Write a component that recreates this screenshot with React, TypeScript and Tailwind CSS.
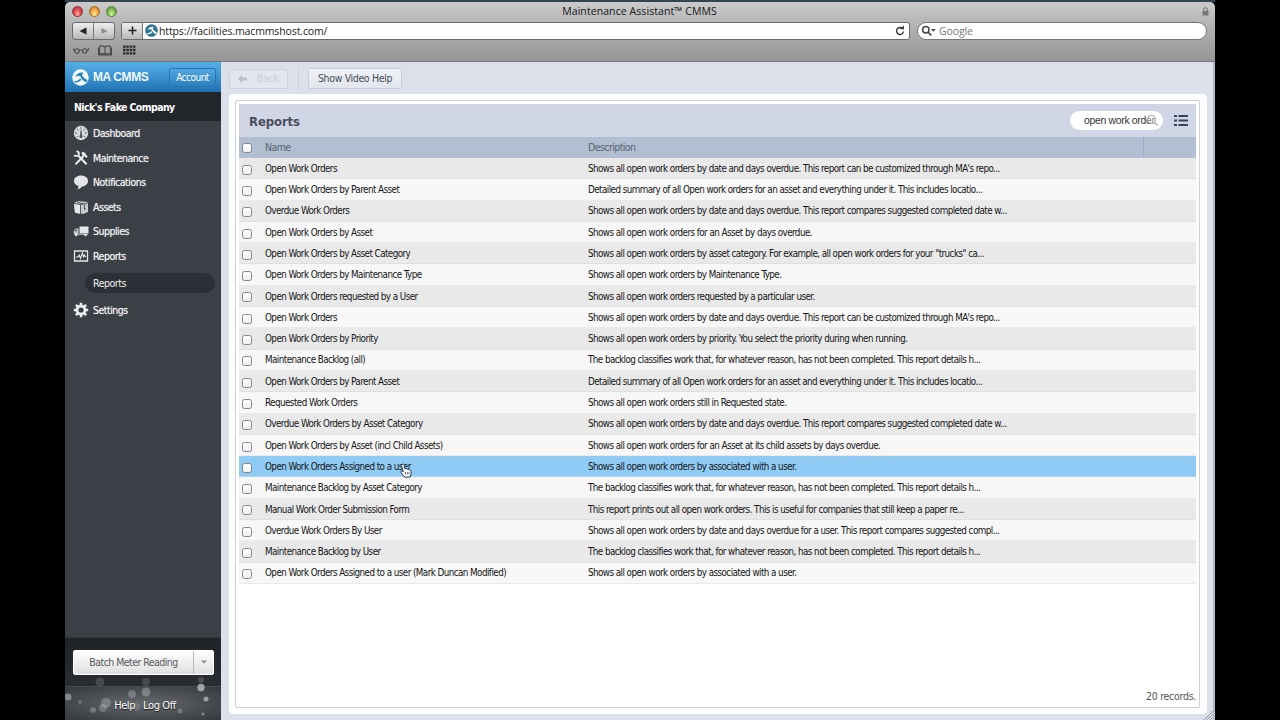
import type { ReactNode } from "react";

const overdue = "Shows all open work orders by date and days overdue. ";
const backlog =
  "The backlog classifies work that, for whatever reason, has not been completed. This report details h...";
const parent =
  "Detailed summary of all Open work orders for an asset and everything under it. This includes locatio...";

const reports = [
  { name: "Open Work Orders", description: overdue + "This report can be customized through MA's repo..." },
  { name: "Open Work Orders by Parent Asset", description: parent },
  { name: "Overdue Work Orders", description: overdue + "This report compares suggested completed date w..." },
  { name: "Open Work Orders by Asset", description: "Shows all open work orders for an Asset by days overdue." },
  {
    name: "Open Work Orders by Asset Category",
    description:
      'Shows all open work orders by asset category. For example, all open work orders for your "trucks" ca...',
  },
  { name: "Open Work Orders by Maintenance Type", description: "Shows all open work orders by Maintenance Type." },
  {
    name: "Open Work Orders requested by a User",
    description: "Shows all open work orders requested by a particular user.",
  },
  { name: "Open Work Orders", description: overdue + "This report can be customized through MA's repo..." },
  {
    name: "Open Work Orders by Priority",
    description: "Shows all open work orders by priority. You select the priority during when running.",
  },
  { name: "Maintenance Backlog (all)", description: backlog },
  { name: "Open Work Orders by Parent Asset", description: parent },
  { name: "Requested Work Orders", description: "Shows all open work orders still in Requested state." },
  {
    name: "Overdue Work Orders by Asset Category",
    description: overdue + "This report compares suggested completed date w...",
  },
  {
    name: "Open Work Orders by Asset (incl Child Assets)",
    description: "Shows all open work orders for an Asset at its child assets by days overdue.",
  },
  {
    name: "Open Work Orders Assigned to a user",
    description: "Shows all open work orders by associated with a user.",
    selected: true,
  },
  { name: "Maintenance Backlog by Asset Category", description: backlog },
  {
    name: "Manual Work Order Submission Form",
    description: "This report prints out all open work orders. This is useful for companies that still keep a paper re...",
  },
  {
    name: "Overdue Work Orders By User",
    description:
      "Shows all open work orders by date and days overdue for a user. This report compares suggested compl...",
  },
  { name: "Maintenance Backlog by User", description: backlog },
  {
    name: "Open Work Orders Assigned to a user (Mark Duncan Modified)",
    description: "Shows all open work orders by associated with a user.",
  },
];

function Logo({ size, disc, mark }: { size: number; disc: string; mark: string }) {
  return (
    <svg width={size} height={size} viewBox="0 0 18 18" className="shrink-0">
      <circle cx="9" cy="9" r="8.7" fill={disc} />
      <path d="M3.4 8.200C5 4.800 8.500 2.800 12.200 4L10.600 6.400C11.800 8.800 13.600 10.600 16.400 11.600L15.300 14.200C12 13 9.900 10.800 8.800 7.700 7.400 7 5 7.200 3.400 8.200Z" fill={mark} />
      <path d="M2.300 12.800C4.800 12.900 7 12 8.600 9.800L9.900 11.400C8 13.800 5.300 14.700 3 14.200Z" fill={mark} />
    </svg>
  );
}

function DashboardIcon() {
  return (
    <svg width="16" height="16" viewBox="0 0 16 16">
      <circle cx="8" cy="8" r="7.2" fill="#d9dadc" />
      <path
        d="M8 2v2.500M4 3.700l1.400 1.900M12 3.700l-1.400 1.900M2 7.800l2.300.5M14 7.800l-2.300.5M3.700 12l1.400-1M12.300 12l-1.400-1"
        stroke="#6a6e74"
      />
      <path d="M7.500 5.500h1l.6 6.300H6.900z" fill="#4a4e55" />
      <circle cx="8" cy="11.500" r="1.500" fill="#4a4e55" />
    </svg>
  );
}

function ToolsIcon() {
  return (
    <svg width="16" height="16" viewBox="0 0 16 16" fill="none" stroke="#eceded">
      <path d="M5.500 5.800l8 8.400" strokeWidth="2.100" />
      <path d="M1 5.200c2 1.400 4.700.6 4.900-1.200C6 2.500 4.900 1.500 3.500 1.200" strokeWidth="1.800" />
      <path d="M2.500 14.200l8-8" strokeWidth="2" />
      <path d="M9 2.400l5 4.800M9.600 5.700l2.600-2.600" strokeWidth="2.200" />
    </svg>
  );
}

function SpeechIcon() {
  return (
    <svg width="16" height="16" viewBox="0 0 16 16">
      <path
        d="M8 1.500c4 0 7 2.300 7 5.400s-3 5.500-6.300 5.500c-.6 1.400-2.200 2.600-4.300 2.700.9-.8 1.200-1.900 1-3.100C2.800 11.200 1 9.300 1 7 1 3.800 4 1.500 8 1.500Z"
        fill="#e4e5e6"
      />
    </svg>
  );
}

function AssetsIcon() {
  return (
    <svg width="16" height="16" viewBox="0 0 16 16">
      <path d="M1 4l4-2 9 1 1 2v8l-5 2-8-1.500z" fill="#c7c9cb" />
      <path d="M1 4.500l6 1v9.200l-5-1z" fill="#e6e7e8" />
      <path
        d="M7.500 5.500V15M1 4.500l6.500 1 6.500-1M4 3l7 2.200M11.500 5.500v5l1.300-1.200"
        fill="none"
        stroke="#4a4e54"
        strokeWidth=".9"
      />
    </svg>
  );
}

function TruckIcon() {
  return (
    <svg width="16" height="16" viewBox="0 0 16 16">
      <path d="M6.500 3.500h9v7h-9z" fill="#e6e7e8" />
      <path d="M5.500 5.500h-3L.8 8v3.500h4.700z" fill="#c9cbcd" />
      <path d="M2.600 6.500h1.200v1.700H1.700z" fill="#3b3f45" />
      <path d="M5 11h10v1H5z" fill="#aaacb0" />
      <circle cx="3.200" cy="12" r="1.300" fill="#e6e7e8" />
      <circle cx="12.500" cy="12" r="1.300" fill="#e6e7e8" />
    </svg>
  );
}

function ReportsIcon() {
  return (
    <svg width="16" height="16" viewBox="0 0 16 16" fill="none" stroke="#e4e5e6">
      <path d="M1.500 3h13v10h-13z" strokeWidth="1.300" />
      <path d="M3 9h2l1.300-2 1.200 3.500L9.300 5l1.200 4 1-2 .7 1.500H13" strokeWidth="1.100" />
    </svg>
  );
}

function GearIcon() {
  return (
    <svg width="16" height="16" viewBox="0 0 16 16" fill="none" stroke="#eceded">
      <circle cx="8" cy="8" r="4" strokeWidth="2.800" />
      <path
        d="M8 .8v2.500M8 12.700v2.500M.8 8h2.500M12.700 8h2.500M2.900 2.900l1.800 1.800M11.300 11.300l1.800 1.800M2.900 13.100l1.800-1.800M11.300 4.700l1.800-1.800"
        strokeWidth="2.600"
      />
    </svg>
  );
}

function NavItem({ icon, label }: { icon: ReactNode; label: string }) {
  return (
    <div className="flex h-[24.5px] items-center gap-[4px] pl-2">
      {icon}
      <span className="text-[10.5px] tracking-[-0.5px] text-[#f2f2f3] [text-shadow:0_0_1px_#bbb]">{label}</span>
    </div>
  );
}

function Checkbox() {
  return (
    <span className="block size-[10px] shrink-0 rounded-[2.5px] border border-[#85878c] bg-gradient-to-b from-white to-[#eeeef0]" />
  );
}

function BrowserChrome() {
  return (
    <header className="flex h-[60px] shrink-0 flex-col rounded-t-[5px] border-b border-[#777] bg-gradient-to-b from-[#cbcbcb] via-[#b0b0b0] via-45% to-[#969696] font-['Open_Sans','Noto_Sans',sans-serif]">
      <div className="flex h-[19px] items-center pr-[6px] pl-[7px]">
        <div className="flex w-[60px] gap-[6px]">
          <span className="size-[11px] rounded-full border border-[#8d3435] bg-radial-[at_50%_80%] from-[#ffb0a8] via-[#e54b51] to-[#9c2932]" />
          <span className="size-[11px] rounded-full border border-[#a56d2d] bg-radial-[at_50%_80%] from-[#ffed9b] via-[#f1a642] to-[#a7682c]" />
          <span className="size-[11px] rounded-full border border-[#5b8141] bg-radial-[at_50%_80%] from-[#d9ff9f] via-[#81bd54] to-[#4d7d39]" />
        </div>
        <h1 className="flex-1 pr-[17px] text-center text-[10.5px] font-medium tracking-[0.08px] text-[#161616]">
          Maintenance Assistant™ CMMS
        </h1>
        <svg width="7" height="9" viewBox="0 0 7 9" className="ml-[38px]">
          <path d="M1.700 4V2.600a1.800 1.800 0 013.600 0V4" fill="none" stroke="#666" />
          <path d="M.5 4h6v4.500h-6z" fill="#777" />
        </svg>
      </div>
      <div className="flex h-[19px] items-center pr-[8px] pl-[7px]">
        <div className="flex h-[18px] w-[43px] rounded-[3px] border border-[#6b6b6b] bg-gradient-to-b from-[#eee] to-[#b9b9b9]">
          <span className="flex flex-1 items-center justify-center border-r border-[#777]">
            <svg width="8" height="8" viewBox="0 0 8 8">
              <path d="M7.500.5v7L.5 4z" fill="#222" />
            </svg>
          </span>
          <span className="flex flex-1 items-center justify-center">
            <svg width="7" height="8" viewBox="0 0 8 8">
              <path d="M.5.500v7L7.500 4z" fill="#8e8e8e" />
            </svg>
          </span>
        </div>
        <div className="ml-[6px] flex h-[18px] w-[789px] overflow-hidden rounded-[3px] border border-[#6b6b6b] bg-white">
          <span className="flex w-[21px] items-center justify-center border-r border-[#777] bg-gradient-to-b from-[#eee] to-[#b9b9b9]">
            <svg width="9" height="9" viewBox="0 0 9 9">
              <path d="M4.500.500v8M.5 4.500h8" stroke="#222" strokeWidth="1.600" />
            </svg>
          </span>
          <span className="flex flex-1 items-center gap-[1px] pl-[2px]">
            <Logo size={13} disc="#2c7396" mark="#fff" />
            <span className="pt-px text-[10.5px] leading-none font-medium tracking-[-0.12px] text-[#222]">
              https://facilities.macmmshost.com/
            </span>
          </span>
          <svg width="10" height="12" viewBox="0 0 10 12" className="mt-[2px] mr-[4px]">
            <path d="M7.500 3.500A3.500 3.500 0 108.500 6.500" fill="none" stroke="#333" strokeWidth="1.400" />
            <path d="M4.800 3.900L9 4.500 8.700.400z" fill="#333" />
          </svg>
        </div>
        <div className="ml-[7px] flex h-[18px] flex-1 items-center rounded-full border border-[#777] bg-white pl-[3px]">
          <svg width="15" height="12" viewBox="0 0 15 12">
            <circle cx="4.800" cy="4.800" r="3.200" fill="none" stroke="#444" strokeWidth="1.500" />
            <path d="M7 7l3.300 3.500" stroke="#444" strokeWidth="1.800" />
            <path d="M10 4h4.500l-2.250 2.700z" fill="#444" />
          </svg>
          <span className="ml-[3px] pt-px text-[10.5px] leading-none tracking-[-0.1px] text-[#777]">Google</span>
        </div>
      </div>
      <div className="flex h-[20px] items-center gap-[9px] pl-2">
        <svg width="16" height="8" viewBox="0 0 16 8" fill="none" stroke="#4b4b4b" strokeWidth="1.100">
          <circle cx="4" cy="5" r="2.200" />
          <circle cx="11.800" cy="5" r="2.200" />
          <path d="M6.200 4.500q1.700-1 3.400 0M2 4Q0 5 .8 2.500M14 4q2.500.5 1.500-2" />
        </svg>
        <svg width="14" height="11" viewBox="0 0 14 11" fill="none" stroke="#4b4b4b" strokeWidth="1.100">
          <path d="M7 2Q4 0 1.500 1.500v7.500Q4.500 8 7 9.500 9.500 8 12.500 9V1.500Q10 0 7 2v7.500M.5 2.500v7.500h13V2.500" />
        </svg>
        <svg width="13" height="10" viewBox="0 0 13 10" className="ml-[2px]">
          <path d="M0 1.600h12.500M0 5h12.500M0 8.400h12.500" stroke="#292929" strokeWidth="2.300" strokeDasharray="2.500 .8" />
        </svg>
      </div>
    </header>
  );
}

function Sidebar() {
  return (
    <aside className="flex w-[156px] shrink-0 flex-col bg-[#3b3f46]">
      <div className="flex h-[30px] shrink-0 items-center bg-gradient-to-b from-[#56b0e8] to-[#1e72b2] pr-[5px] pl-[7px]">
        <Logo size={17} disc="#f4f9fc" mark="#2c84bd" />
        <span className="ml-[4px] font-['Liberation_Sans',Arial,sans-serif] text-[12px] font-bold tracking-[-0.4px] text-[#f1f8fd]">
          MA CMMS
        </span>
        <button className="ml-auto h-[19px] w-[47px] rounded-[2px] border border-[#2875b3] bg-gradient-to-b from-[#50a6df] to-[#2c81be] pt-px text-[10px] tracking-[-0.52px] text-white">
          Account
        </button>
      </div>
      <div className="flex h-[29px] shrink-0 items-center bg-[#22262b] pt-[2px] pl-[9px] text-[10.5px] font-bold tracking-[-0.6px] text-white">
        Nick's Fake Company
      </div>
      <nav>
        <NavItem icon={<DashboardIcon />} label="Dashboard" />
        <NavItem icon={<ToolsIcon />} label="Maintenance" />
        <NavItem icon={<SpeechIcon />} label="Notifications" />
        <NavItem icon={<AssetsIcon />} label="Assets" />
        <NavItem icon={<TruckIcon />} label="Supplies" />
        <NavItem icon={<ReportsIcon />} label="Reports" />
        <div className="mt-[5px] mr-[6px] mb-[5px] ml-[20px] flex h-[20px] items-center rounded-full bg-[#2c3036] pl-2 text-[10.5px] tracking-[-0.46px] text-[#ededee]">
          Reports
        </div>
        <NavItem icon={<GearIcon />} label="Settings" />
      </nav>
      <div className="mt-auto flex h-[49px] items-center border-t border-[#31353a] bg-gradient-to-b from-[#202429] to-[#292c31] pl-2">
        <button className="flex h-[25px] w-[141px] items-center rounded-[2px] border border-white bg-gradient-to-b from-white to-[#e0e0e0] text-[10.5px] tracking-[-0.55px] text-[#55585d]">
          <span className="flex h-full flex-1 items-center justify-center border-r border-[#bbb]">Batch Meter Reading</span>
          <span className="flex w-[19px] justify-center">
            <svg width="6" height="4" viewBox="0 0 6 4">
              <path d="M0 .5h6L3 3.500z" fill="#888" />
            </svg>
          </span>
        </button>
      </div>
      <div className="relative flex h-[34px] shrink-0 items-center justify-center gap-2 border-t border-[#484b50] bg-radial from-[#66696d] to-[#35383d] pt-[4px] pl-[4px] text-[11px] tracking-[-0.4px] text-white">
        <svg width="156" height="46" viewBox="0 0 156 46" className="absolute bottom-0 left-0" fill="#c2c6ca">
          <circle cx="35" cy="8" r="4.500" opacity=".2" />
          <circle cx="81" cy="8" r="4" opacity=".2" />
          <circle cx="81" cy="18" r="4.500" opacity=".4" />
          <circle cx="67" cy="20" r="4" opacity=".35" />
          <circle cx="136" cy="13.500" r="3.700" opacity=".75" />
          <circle cx="136" cy="6" r="3" opacity=".22" />
          <circle cx="141" cy="25" r="2.500" opacity=".7" />
          <circle cx="3" cy="23" r="3.500" opacity=".5" />
          <circle cx="41" cy="29" r="5" opacity=".35" />
          <circle cx="38" cy="34" r="4" opacity=".3" />
          <circle cx="28" cy="36" r="3" opacity=".35" />
          <circle cx="15" cy="28" r="2" opacity=".3" />
          <circle cx="71" cy="33" r="4" opacity=".2" />
          <circle cx="115" cy="37" r="2.500" opacity=".35" />
          <circle cx="138" cy="40" r="1.500" opacity=".5" />
        </svg>
        <span className="relative [text-shadow:0_1px_1px_#111]">Help</span>
        <span className="relative [text-shadow:0_1px_1px_#111]">Log Off</span>
      </div>
    </aside>
  );
}

function ReportsPanel() {
  return (
    <section className="flex flex-1 flex-col rounded-[4px] border border-white bg-[#fcfdff] p-[5px] pr-[6px]">
      <div className="flex flex-1 flex-col rounded-[2px] border border-[#ccd1dc] bg-white px-[3px] pt-[3px]">
        <div className="flex h-[33px] shrink-0 items-center bg-[#d1d6e6] pr-[8px] pl-[10px]">
          <h2 className="flex-1 pt-px text-[13px] font-bold tracking-[-0.1px] text-[#484e5c]">Reports</h2>
          <div className="relative mr-[11px] flex h-[19px] w-[93px] items-center rounded-full bg-white pl-[14px] font-['Liberation_Sans',Arial,sans-serif] text-[10.5px] tracking-[-0.35px] whitespace-nowrap text-[#333]">
            open work order
            <svg
              width="13"
              height="13"
              viewBox="0 0 13 13"
              className="absolute top-[3px] left-[76px]"
              fill="none"
              stroke="#aaa"
            >
              <circle cx="5.500" cy="5.500" r="4" fill="#fff" fillOpacity=".4" strokeWidth="1.200" />
              <path d="M8.500 8.500l3 3" strokeWidth="1.500" />
            </svg>
          </div>
          <svg width="14" height="13" viewBox="0 0 14 13" stroke="#3a4258" strokeWidth="2">
            <path d="M0 2h3M4.500 2H14M0 6.500h3M4.500 6.500H14M0 11h3M4.500 11H14" />
          </svg>
        </div>
        <div className="flex h-[21px] shrink-0 items-center bg-[#b2bed1] text-[10.5px] tracking-[-0.58px] text-[#596474]">
          <span className="w-[26px] pl-[3px]">
            <Checkbox />
          </span>
          <span className="w-[323px]">Name</span>
          <span className="flex-1">Description</span>
          <span className="h-full w-[53px] border-l border-[#a0aec4]" />
        </div>
        <ul>
          {reports.map((report, i) => (
            <li
              key={i}
              className={`flex h-[21.3px] items-center border-b text-[9.75px] tracking-[-0.545px] whitespace-nowrap text-[#151515] ${
                report.selected
                  ? "border-[#a9d4f2] bg-[#90cbf6]"
                  : i % 2 === 0
                    ? "border-[#e0e0e1] bg-[#e9e9ea]"
                    : "border-[#eaeaeb] bg-[#f7f7f7]"
              }`}
            >
              <span className="w-[26px] pt-[3px] pl-[3px]">
                <Checkbox />
              </span>
              <span className="w-[323px] pt-px">{report.name}</span>
              <span className="pt-px">{report.description}</span>
            </li>
          ))}
        </ul>
        <p className="mt-auto pb-[6px] text-right text-[10.5px] tracking-[-0.28px] text-[#555]">20 records.</p>
      </div>
    </section>
  );
}

export default function App() {
  return (
    <div className="relative flex h-[720px] w-[1280px] flex-col overflow-hidden bg-black px-[65px] font-['DejaVu_Sans_Condensed','DejaVu_Sans',sans-serif] leading-none">
      <div className="h-[2px] shrink-0 bg-[#34444c]" />
      <BrowserChrome />
      <div className="flex min-h-0 flex-1">
        <Sidebar />
        <main className="flex flex-1 flex-col border-r-2 border-[#a9bdcc] bg-[#dce0ea] pr-[6px] pb-[6px] pl-[8px]">
          <div className="flex h-[32px] shrink-0 items-center pt-[1px] text-[10.5px]">
            <button className="flex h-[20px] w-[59px] items-center gap-[10px] rounded-[2px] border border-[#ced2dc] bg-[#e3e6ee] pl-[8px] tracking-[-0.42px] text-[#c8ccd6]">
              <svg width="9" height="8" viewBox="0 0 9 8">
                <path d="M4 0v2.500h5v3H4V8L0 4z" fill="#b9bfcb" />
              </svg>
              Back
            </button>
            <span className="mr-[9px] ml-[10px] h-[22px] w-px bg-[#cbd0dc]" />
            <button className="h-[21px] w-[94px] rounded-[2px] border border-[#c9cdd8] bg-gradient-to-b from-[#f0f2f6] to-[#e2e5ec] tracking-[-0.36px] text-[#484e59]">
              Show Video Help
            </button>
          </div>
          <ReportsPanel />
        </main>
      </div>

      {/* pointer over the selected row */}
      <svg width="13" height="15" viewBox="0 0 13 15" className="absolute top-[463px] left-[399px]">
        <path
          d="M3 1.500c.8-.8 2-.3 2.200.8L6 6l1-.5c.8-.2 1.300.2 1.500.8.8-.4 1.500 0 1.700.6.900-.3 1.700.3 1.800 1.100l.2 2.500-1 3.500-5.500.2L2 9.500c-.8-1 .3-2.200 1.400-1.300l1 .8L2.600 3c-.1-.6 0-1.100.4-1.500Z"
          fill="#fff"
          stroke="#26384a"
        />
        <path d="M6.500 9v2.500M8.300 9v2.500M10 9v2.500" stroke="#26384a" strokeWidth=".7" />
      </svg>
      <svg width="10" height="10" viewBox="0 0 10 10" className="absolute right-[67px] bottom-0" stroke="#8f949b">
        <path d="M1 10l9-9M4 10l6-6M7 10l3-3" />
      </svg>
    </div>
  );
}
